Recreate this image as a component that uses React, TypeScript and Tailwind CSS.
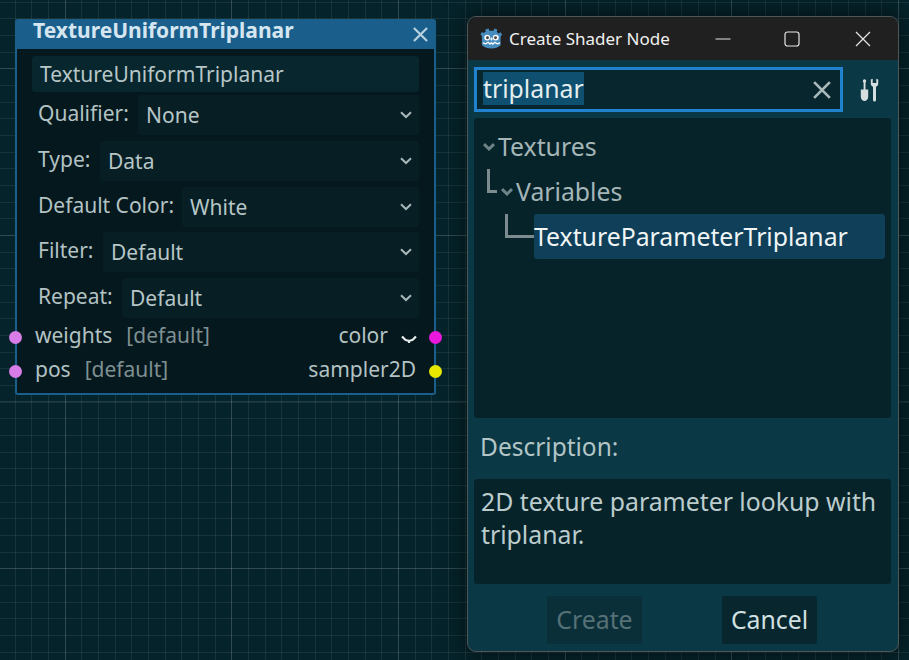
const font = "font-['Noto_Sans',sans-serif]";

function Chevron({ className, weight = 2 }: { className?: string; weight?: number }) {
  return (
    <svg viewBox="0 0 12 8" className={className} fill="none" stroke="currentColor" strokeWidth={weight}>
      <path d="M1 1.2 L6 6 L11 1.2" />
    </svg>
  );
}

function Cross({ className }: { className?: string }) {
  return (
    <svg viewBox="0 0 16 16" className={className} fill="none" stroke="currentColor" strokeWidth="2.400">
      <path d="M1 1 L15 15 M15 1 L1 15" />
    </svg>
  );
}

function Port({ side, y, color }: { side: string; y: string; color: string }) {
  return <span className={`absolute h-[13px] w-[13px] rounded-full ${side} ${y} ${color}`} />;
}

function SelectRow({ label, value, labelWidth }: { label: string; value: string; labelWidth: string }) {
  return (
    <div className="flex h-[40px] items-start">
      <span className={`${labelWidth} shrink-0 pl-[6px] pt-[3px] text-[#b3c2c3]`}>{label}</span>
      <div className="flex h-[40px] flex-1 items-center justify-between rounded-[3px] bg-[#061e24] pl-[8px] pr-[7px] text-[#b7c6c7]">
        <span>{value}</span>
        <Chevron className="h-[8px] w-[12px] text-[#a9b8b9]" />
      </div>
    </div>
  );
}

function GodotLogo() {
  return (
    <svg viewBox="0 0 24 24" className="h-[23px] w-[23px] shrink-0">
      <path
        fill="#478cbf"
        d="M9 1.5 L9.8 4 h4.4 L15 1.5 l3 1.2 -.5 2.6 2 1.5 2-1.2 1.5 2.6 -1.5 1.6 V19 c-2 2-6 3.5-9.5 3.5 S4 21 2 19 V9.3 L.5 7.7 2 5.1 l2 1.2 2-1.5 L5.5 2.700 Z"
      />
      <circle cx="7.500" cy="11" r="3" fill="#fff" />
      <circle cx="16.500" cy="11" r="3" fill="#fff" />
      <circle cx="7.800" cy="11.200" r="1.500" fill="#414042" />
      <circle cx="16.200" cy="11.200" r="1.500" fill="#414042" />
      <rect x="11" y="11" width="2" height="3" rx="1" fill="#fff" />
      <path d="M3 16.500 L6 17.500 L8.500 16 L10.500 17.800 L12 16.500 L13.500 17.800 L15.500 16 L18 17.500 L21 16.500" fill="none" stroke="#fff" strokeWidth="1.300" />
    </svg>
  );
}

function ToolsIcon() {
  return (
    <svg viewBox="0 0 20 24" className="h-[24px] w-[20px]" fill="#d5dfe0">
      <circle cx="4.500" cy="3" r="1.700" />
      <rect x="3.600" y="3" width="1.900" height="9" />
      <path d="M0.800 11.500 h7.400 v7 c0 2.800 -1.700 4.500 -3.700 4.500 s-3.700 -1.700 -3.700 -4.500 Z" />
      <path d="M10.800 1.500 v4 c0 1.800 1 2.800 2.200 3.300 V22 a1.500 1.500 0 0 0 3 0 V8.800 c1.200 -.5 2.200 -1.500 2.200 -3.300 v-4 l-1.900 -.8 v4.300 h-3.600 V.7 Z" />
    </svg>
  );
}

function TreeElbow({ className }: { className: string }) {
  return <span className={`h-[24px] shrink-0 self-start border-b-[3.500px] border-l-[3.500px] border-[#7c8c8e] ${className}`} />;
}

export default function App() {
  return (
    <div
      className={`${font} flex h-[660px] w-[909px] items-start overflow-hidden bg-[#05232a] bg-[repeating-linear-gradient(to_right,transparent_0_64.67px,rgba(255,255,255,0.11)_64.67px_65.67px,transparent_65.67px_166.667px),repeating-linear-gradient(to_bottom,transparent_0_68px,rgba(255,255,255,0.11)_68px_69px,transparent_69px_166.667px),repeating-linear-gradient(to_right,transparent_0_14.67px,rgba(255,255,255,0.075)_14.67px_15.67px,transparent_15.67px_16.667px),repeating-linear-gradient(to_bottom,transparent_0_1.67px,rgba(255,255,255,0.075)_1.67px_2.67px,transparent_2.67px_16.667px)] pl-[15px]`}
    >
      {/* graph node */}
      <div className="relative mt-[19px] w-[421px] text-[21px] leading-[30px]">
        <div className="flex h-[30px] items-center justify-between rounded-t-[3px] bg-[#1a5f8c] pl-[18px] pr-[8px]">
          <span className="-mt-[8px] font-bold text-[#d6e6f0]">TextureUniformTriplanar</span>
          <Cross className="h-[15px] w-[15px] text-[#b5d0de]" />
        </div>
        <div className="flex flex-col rounded-b-[3px] border-x-[2.5px] border-b-[2.5px] border-[#1a5f8c] bg-[#04181e] px-[15px] pb-[7px] pt-[7px]">
          <div className="flex h-[36px] items-center rounded-[3px] bg-[#07262e] pb-[1px] pl-[8px] text-[#b7c6c7]">
            TextureUniformTriplanar
          </div>
          <div className="mt-[3px] flex flex-col gap-[5.75px]">
            <SelectRow label="Qualifier:" value="None" labelWidth="w-[106px]" />
            <SelectRow label="Type:" value="Data" labelWidth="w-[68px]" />
            <SelectRow label="Default Color:" value="White" labelWidth="w-[150px]" />
            <SelectRow label="Filter:" value="Default" labelWidth="w-[71px]" />
            <SelectRow label="Repeat:" value="Default" labelWidth="w-[90px]" />
          </div>
          <div className="flex h-[34px] items-center pb-[1px] pl-[3px] text-[#b3c2c3]">
            <span>weights</span>
            <span className="ml-[14px] text-[#7f9092]">[default]</span>
            <span className="ml-auto">color</span>
            <svg viewBox="0 0 16 9" className="ml-[13px] mr-[2px] mt-[9px] h-[9px] w-[16px]" fill="none" stroke="#e8eeee" strokeWidth="2.200">
              <path d="M1 1.500 L3 3.500 C5 6.500 11 6.500 13 3.500 L15 1.500 M8 6 V8" />
            </svg>
          </div>
          <div className="flex h-[34px] items-center pb-[1px] pl-[3px] pr-[3px] text-[#b3c2c3]">
            <span>pos</span>
            <span className="ml-[14px] text-[#7f9092]">[default]</span>
            <span className="ml-auto">sampler2D</span>
          </div>
        </div>
        <Port side="-left-[6px]" y="top-[312px]" color="bg-[#d87ce8]" />
        <Port side="-left-[6px]" y="top-[346px]" color="bg-[#d87ce8]" />
        <Port side="-right-[6px]" y="top-[312px]" color="bg-[#ea17dc]" />
        <Port side="-right-[6px]" y="top-[346px]" color="bg-[#e8e800]" />
      </div>

      {/* dialog window */}
      <div className="ml-[31px] mt-[16px] flex h-[636px] w-[432px] flex-col overflow-hidden rounded-[9px] border border-[#4f5658] bg-[#0a3844] text-[24.8px] shadow-[0_0_24px_rgba(0,0,0,0.6)]">
        <div className="flex h-[43px] shrink-0 items-center bg-[#202020] pl-[12px] text-[17px] text-[#f0f0f0]">
          <GodotLogo />
          <span className="ml-[6px]">Create Shader Node</span>
          <svg viewBox="0 0 16 16" className="ml-auto h-[16px] w-[16px]" fill="none" stroke="#e6e6e6" strokeWidth="1.200">
            <path d="M0.500 8 H15.500" />
          </svg>
          <svg viewBox="0 0 16 16" className="ml-[53px] h-[16px] w-[16px]" fill="none" stroke="#e6e6e6" strokeWidth="1.200">
            <rect x="1" y="1" width="14" height="14" rx="2.500" />
          </svg>
          <svg viewBox="0 0 16 16" className="ml-[55px] mr-[27px] h-[16px] w-[16px]" fill="none" stroke="#e6e6e6" strokeWidth="1.200">
            <path d="M1 1 L15 15 M15 1 L1 15" />
          </svg>
        </div>
        <div className="flex flex-1 flex-col px-[6px]">
          <div className="mt-[7px] flex items-center">
            <div className="flex h-[45px] w-[369px] items-center justify-between border-[3px] border-[#2183cf] bg-[#07262e] pl-[6px] pr-[9px]">
              <span className="-mt-[3px] bg-[#0f4f70] leading-[33px] text-[#e4eeee]">triplanar</span>
              <Cross className="h-[18px] w-[18px] text-[#a9b8b9]" />
            </div>
            <span className="ml-[17px]">
              <ToolsIcon />
            </span>
          </div>
          <div className="mt-[6px] flex h-[300px] w-[417px] flex-col rounded-[3px] bg-[#06232a] pl-[9px] pr-[6px] text-[#a4b6b8]">
            <div className="mt-[6px] flex h-[45px] items-center">
              <Chevron weight={3} className="h-[8px] w-[12px] text-[#6d8386]" />
              <span className="ml-[3px] leading-[33px]">Textures</span>
            </div>
            <div className="flex h-[45px] items-center">
              <TreeElbow className="ml-[4px] w-[10px]" />
              <Chevron weight={3} className="ml-[4px] h-[8px] w-[12px] text-[#6d8386]" />
              <span className="ml-[3px]">Variables</span>
            </div>
            <div className="flex h-[45px] items-center">
              <TreeElbow className="ml-[22px] w-[29px]" />
              <span className="flex h-[45px] flex-1 items-center rounded-[3px] bg-[#0f3f59] text-[#f0f5f5]">
                TextureParameterTriplanar
              </span>
            </div>
          </div>
          <div className="flex h-[61px] items-center pb-[2px] pl-[6px] text-[24.5px] text-[#b3c5c7]">Description:</div>
          <div className="h-[105px] w-[417px] rounded-[3px] bg-[#06232a] px-[7px] pt-[6px] leading-[33px] text-[#bccccd]">
            2D texture parameter lookup with triplanar.
          </div>
          <div className="mt-[12px] flex">
            <button className="ml-[73px] h-[48px] w-[95px] rounded-[3px] bg-[#0a2f39] text-[#557176]">Create</button>
            <button className="ml-[80px] h-[48px] w-[95px] rounded-[3px] bg-[#07262e] text-[#d3e0e1]">Cancel</button>
          </div>
        </div>
      </div>
    </div>
  );
}
